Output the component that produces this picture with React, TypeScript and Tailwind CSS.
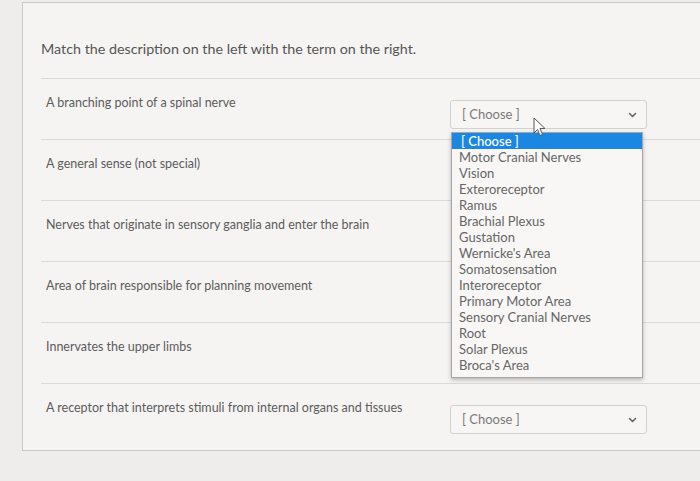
import React from "react";

const rows = [
  "A branching point of a spinal nerve",
  "A general sense (not special)",
  "Nerves that originate in sensory ganglia and enter the brain",
  "Area of brain responsible for planning movement",
  "Innervates the upper limbs",
  "A receptor that interprets stimuli from internal organs and tissues",
];

const options = [
  "Motor Cranial Nerves",
  "Vision",
  "Exteroreceptor",
  "Ramus",
  "Brachial Plexus",
  "Gustation",
  "Wernicke's Area",
  "Somatosensation",
  "Interoreceptor",
  "Primary Motor Area",
  "Sensory Cranial Nerves",
  "Root",
  "Solar Plexus",
  "Broca's Area",
];

const Chevron = () => (
  <svg width="9" height="6" viewBox="0 0 9 6" className="text-[#666]">
    <path d="M1.5 1.5 L4.5 4.5 L7.5 1.5" fill="none" stroke="currentColor" strokeWidth="1.6" strokeLinecap="round" strokeLinejoin="round" />
  </svg>
);

const Select = ({ open }: { open?: boolean }) => (
  <div className="relative mt-[21px] mr-[53px] w-[197px] h-[29px] shrink-0">
    <div className="h-full border border-[#d3d1ce] rounded-[3px] bg-[#f7f6f4] flex items-center justify-between pl-[11px] pr-[9px]">
      <span className="text-[13px] text-[#7a7a7a]">[ Choose ]</span>
      <Chevron />
    </div>
    {open && (
      <div className="absolute left-[1px] top-[32px] w-[192px] bg-[#f8f7f5] border border-[#a9a7a4] shadow-[0_2px_4px_rgba(0,0,0,0.25)] pb-[4px] z-10">
        <div className="bg-[#1b87e2] text-white text-[13px] leading-[16px] pl-[9px] font-medium">[ Choose ]</div>
        {options.map((o) => (
          <div key={o} className="text-[13px] leading-[16px] pl-[7px] text-[#666]">
            {o}
          </div>
        ))}
      </div>
    )}
  </div>
);

const Cursor = () => (
  <svg className="absolute left-[533px] top-[117px] z-20" width="14" height="20" viewBox="0 0 14 20">
    <path d="M1 1 L1 16 L4.5 12.5 L7 18.5 L9.5 17.5 L7 11.5 L12 11.5 Z" fill="#fafafa" stroke="#5a5a5a" strokeWidth="1" strokeLinejoin="round" />
  </svg>
);

export default function App() {
  return (
    <div className="relative w-[700px] h-[481px] overflow-hidden bg-[#efedeb] pl-[22px] pt-[2px] font-['Lato','Open_Sans',sans-serif]">
      <div className="h-[449px] border-l border-t border-b border-[#cac8c5] bg-[#f5f4f2] pl-[18px]">
        <h2 className="pt-[37px] h-[75px] text-[14.3px] text-[#555] leading-[18px]">
          Match the description on the left with the term on the right.
        </h2>
        {rows.map((r, i) => (
          <div key={r} className="h-[61px] border-t border-[#dcdad7] flex items-start justify-between">
            <span className="pt-[16px] pl-[5px] text-[12.5px] leading-[16px] text-[#5c5c5c]">{r}</span>
            {(i === 0 || i === 5) && <Select open={i === 0} />}
          </div>
        ))}
      </div>
      <Cursor />
    </div>
  );
}
